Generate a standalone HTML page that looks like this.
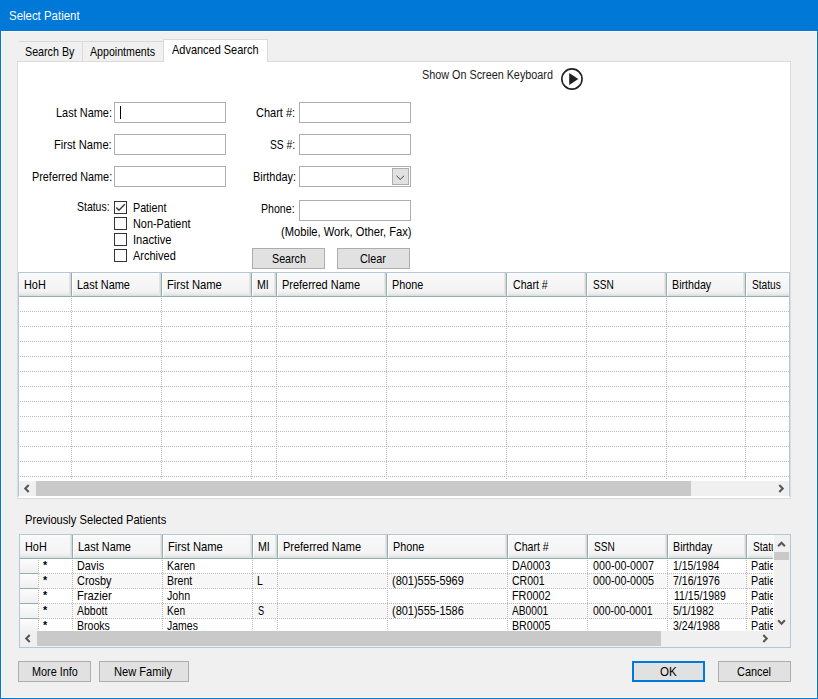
<!DOCTYPE html>
<html><head><meta charset="utf-8"><title>Select Patient</title><style>
*{box-sizing:border-box;margin:0;padding:0}
html,body{width:818px;height:699px;overflow:hidden;background:#f0f0f0}
body{position:relative;font-family:"Liberation Sans",sans-serif;font-size:13px;color:#000}
.a{position:absolute}
.t{position:absolute;white-space:nowrap;transform-origin:0 0}
.title{left:0;top:0;width:818px;height:31px;background:#0078d7}
.panel{left:17px;top:61px;width:774px;height:438px;background:#fff;border:1px solid #dcdcdc}
.tab{top:41px;height:20px;border:1px solid #d9d9d9;border-bottom:none;background:#f0f0f0}
.tab.sel{top:39px;height:23px;background:#fff}
.inp{height:21px;width:112px;background:#fff;border:1px solid #abadb3}
.cb{width:13px;height:13px;border:1px solid #333;background:#fff}
.btn{height:21px;background:#e1e1e1;border:1px solid #adadad}
.grid{position:absolute;background:#fff;border:1px solid #b4c7d9;overflow:hidden}
.hdr{position:absolute;left:0;top:0;height:24px;background:linear-gradient(#ffffff 0,#f8f8f8 10%,#f4f4f4 78%,#ebebeb 90%,#dadada 100%);border-bottom:1px solid #8fb0b0}
.hs{position:absolute;top:0;width:4px;height:23px;background:linear-gradient(90deg,#ebebeb,#d2d2d2 50%,#8fb0b0 50%,#8fb0b0 75%,#fff 75%)}
.vl{position:absolute;width:1px;background-image:linear-gradient(#b8b8b8 50%,transparent 50%);background-size:1px 2px}
.hl{position:absolute;height:1px;background-image:linear-gradient(90deg,#b8b8b8 50%,transparent 50%);background-size:2px 1px}
.sb{position:absolute;background:#f0f0f0}
.th{position:absolute;background:#c9c9c9}
.rh{position:absolute;left:0;width:18px;background:linear-gradient(#fdfdfd,#efefef);border-bottom:1px solid #8fb0b0}
</style></head><body>
<div class="a title"></div>
<div class="a" style="left:0;top:31px;width:1px;height:668px;background:#0078d7"></div>
<div class="a" style="left:817px;top:31px;width:1px;height:668px;background:#0078d7"></div>
<div class="a" style="left:0;top:698px;width:818px;height:1px;background:#0078d7"></div>
<div class="a" style="left:1px;top:31px;width:816px;height:667px;border:1px solid #faf6f0"></div>
<div class="t" style="left:8.95px;top:8.84px;font-size:12px;line-height:14px;transform:scaleX(0.9530);color:#fff;">Select Patient</div>
<div class="a panel"></div>
<div class="a tab" style="left:19px;width:64px;border-left:none"></div>
<div class="a tab" style="left:82px;width:82px"></div>
<div class="a tab sel" style="left:163px;width:105px"></div>
<div class="t" style="left:25.45px;top:44.00px;font-size:13px;line-height:15px;transform:scaleX(0.8235);">Search By</div>
<div class="t" style="left:90.45px;top:44.00px;font-size:13px;line-height:15px;transform:scaleX(0.8176);">Appointments</div>
<div class="t" style="left:172.35px;top:42.00px;font-size:13px;line-height:15px;transform:scaleX(0.8428);">Advanced Search</div>
<div class="t" style="left:422.45px;top:67.84px;font-size:12px;line-height:14px;transform:scaleX(0.9002);color:#1c1c1c;">Show On Screen Keyboard</div>
<svg class="a" style="left:560px;top:67px" width="24" height="24" viewBox="0 0 24 24"><circle cx="11.95" cy="12" r="10.1" fill="#fff" stroke="#231f20" stroke-width="1.6"/><path d="M9.2 5.9 L18.3 12 L9.2 18 Z" fill="#231f20"/></svg>
<div class="t" style="left:55.81px;top:105.00px;font-size:13px;line-height:15px;transform:scaleX(0.8418);">Last Name:</div>
<div class="t" style="left:54.09px;top:137.00px;font-size:13px;line-height:15px;transform:scaleX(0.8588);">First Name:</div>
<div class="t" style="left:31.92px;top:169.00px;font-size:13px;line-height:15px;transform:scaleX(0.8340);">Preferred Name:</div>
<div class="t" style="left:76.65px;top:199.00px;font-size:13px;line-height:15px;transform:scaleX(0.8054);">Status:</div>
<div class="t" style="left:256.35px;top:105.00px;font-size:13px;line-height:15px;transform:scaleX(0.8459);">Chart #:</div>
<div class="t" style="left:270.45px;top:137.00px;font-size:13px;line-height:15px;transform:scaleX(0.7921);">SS #:</div>
<div class="t" style="left:253.21px;top:169.00px;font-size:13px;line-height:15px;transform:scaleX(0.8392);">Birthday:</div>
<div class="t" style="left:260.93px;top:201.00px;font-size:13px;line-height:15px;transform:scaleX(0.8158);">Phone:</div>
<div class="a inp" style="left:114px;top:102px"></div>
<div class="a inp" style="left:114px;top:134px"></div>
<div class="a inp" style="left:114px;top:166px"></div>
<div class="a inp" style="left:299px;top:102px"></div>
<div class="a inp" style="left:299px;top:134px"></div>
<div class="a inp" style="left:299px;top:166px"></div>
<div class="a inp" style="left:299px;top:200px"></div>
<div class="a" style="left:120px;top:106px;width:1px;height:13px;background:#000"></div>
<div class="a" style="left:392px;top:168px;width:17px;height:17px;background:#e1e1e1;border:1px solid #adadad"></div>
<svg class="a" style="left:392px;top:168px" width="17" height="17" viewBox="0 0 17 17"><path d="M4.5 7.8 L8.25 11.5 L12 7.8" fill="none" stroke="#404040" stroke-width="1"/></svg>
<div class="t" style="left:280.55px;top:224.00px;font-size:13px;line-height:15px;transform:scaleX(0.8580);">(Mobile, Work, Other, Fax)</div>
<div class="a cb" style="left:114px;top:201px"></div>
<div class="a cb" style="left:114px;top:217px"></div>
<div class="a cb" style="left:114px;top:233px"></div>
<div class="a cb" style="left:114px;top:249px"></div>
<svg class="a" style="left:114px;top:201px" width="13" height="13" viewBox="0 0 13 13"><path d="M2.3 6.4 L4.95 9.2 L10.8 3.2" fill="none" stroke="#383838" stroke-width="1.4"/></svg>
<div class="t" style="left:133.02px;top:200.00px;font-size:13px;line-height:15px;transform:scaleX(0.8254);">Patient</div>
<div class="t" style="left:133.01px;top:216.00px;font-size:13px;line-height:15px;transform:scaleX(0.8378);">Non-Patient</div>
<div class="t" style="left:133.19px;top:232.00px;font-size:13px;line-height:15px;transform:scaleX(0.8584);">Inactive</div>
<div class="t" style="left:133.35px;top:248.00px;font-size:13px;line-height:15px;transform:scaleX(0.8461);">Archived</div>
<div class="a btn" style="left:252px;top:248px;width:73px"></div>
<div class="a btn" style="left:337px;top:248px;width:73px"></div>
<div class="t" style="left:271.55px;top:251.00px;font-size:13px;line-height:15px;transform:scaleX(0.8228);">Search</div>
<div class="t" style="left:360.05px;top:251.00px;font-size:13px;line-height:15px;transform:scaleX(0.8319);">Clear</div>
<div class="grid" style="left:18px;top:272px;width:772px;height:225px;border-bottom-color:#fff">
<div class="hdr" style="width:770px"></div>
<div class="hs" style="left:50px"></div>
<div class="hs" style="left:140px"></div>
<div class="hs" style="left:230px"></div>
<div class="hs" style="left:255px"></div>
<div class="hs" style="left:365px"></div>
<div class="hs" style="left:485px"></div>
<div class="hs" style="left:565px"></div>
<div class="hs" style="left:645px"></div>
<div class="hs" style="left:724px"></div>
<div class="hl" style="left:1px;top:38px;width:770px"></div>
<div class="hl" style="left:1px;top:53px;width:770px"></div>
<div class="hl" style="left:1px;top:68px;width:770px"></div>
<div class="hl" style="left:1px;top:83px;width:770px"></div>
<div class="hl" style="left:1px;top:98px;width:770px"></div>
<div class="hl" style="left:1px;top:113px;width:770px"></div>
<div class="hl" style="left:1px;top:128px;width:770px"></div>
<div class="hl" style="left:1px;top:143px;width:770px"></div>
<div class="hl" style="left:1px;top:158px;width:770px"></div>
<div class="hl" style="left:1px;top:173px;width:770px"></div>
<div class="hl" style="left:1px;top:188px;width:770px"></div>
<div class="hl" style="left:1px;top:203px;width:770px"></div>
<div class="vl" style="left:52px;top:25px;height:181px"></div>
<div class="vl" style="left:142px;top:25px;height:181px"></div>
<div class="vl" style="left:232px;top:25px;height:181px"></div>
<div class="vl" style="left:257px;top:25px;height:181px"></div>
<div class="vl" style="left:367px;top:25px;height:181px"></div>
<div class="vl" style="left:487px;top:25px;height:181px"></div>
<div class="vl" style="left:567px;top:25px;height:181px"></div>
<div class="vl" style="left:647px;top:25px;height:181px"></div>
<div class="vl" style="left:726px;top:25px;height:181px"></div>
<div class="sb" style="left:0;top:208px;width:770px;height:15px"></div>
<div class="th" style="left:17px;top:208px;width:655px;height:15px"></div>
</div>
<div class="t" style="left:23.81px;top:277.00px;font-size:13px;line-height:15px;transform:scaleX(0.8368);">HoH</div>
<div class="t" style="left:76.71px;top:277.00px;font-size:13px;line-height:15px;transform:scaleX(0.8421);">Last Name</div>
<div class="t" style="left:166.99px;top:277.00px;font-size:13px;line-height:15px;transform:scaleX(0.8632);">First Name</div>
<div class="t" style="left:257.03px;top:277.00px;font-size:13px;line-height:15px;transform:scaleX(0.8185);">MI</div>
<div class="t" style="left:281.71px;top:277.00px;font-size:13px;line-height:15px;transform:scaleX(0.8438);">Preferred Name</div>
<div class="t" style="left:391.52px;top:277.00px;font-size:13px;line-height:15px;transform:scaleX(0.8333);">Phone</div>
<div class="t" style="left:512.65px;top:277.00px;font-size:13px;line-height:15px;transform:scaleX(0.8133);">Chart #</div>
<div class="t" style="left:592.85px;top:277.00px;font-size:13px;line-height:15px;transform:scaleX(0.7782);">SSN</div>
<div class="t" style="left:671.83px;top:277.00px;font-size:13px;line-height:15px;transform:scaleX(0.8222);">Birthday</div>
<div class="t" style="left:751.85px;top:277.00px;font-size:13px;line-height:15px;transform:scaleX(0.7817);">Status</div>
<svg class="a" style="left:0;top:0;overflow:visible" width="1" height="1"><path d="M28.7 485.1 L25.3 488.5 L28.7 491.9" fill="none" stroke="#585858" stroke-width="2.1"/></svg>
<svg class="a" style="left:0;top:0;overflow:visible" width="1" height="1"><path d="M779.3 485.1 L782.7 488.5 L779.3 491.9" fill="none" stroke="#585858" stroke-width="2.1"/></svg>
<div class="t" style="left:24.69px;top:512.00px;font-size:13px;line-height:15px;transform:scaleX(0.8572);">Previously Selected Patients</div>
<div class="grid" style="left:19px;top:534px;width:772px;height:114px;">
<div class="hdr" style="width:770px"></div>
<div class="hs" style="left:50px"></div>
<div class="hs" style="left:140px"></div>
<div class="hs" style="left:230px"></div>
<div class="hs" style="left:255px"></div>
<div class="hs" style="left:365px"></div>
<div class="hs" style="left:485px"></div>
<div class="hs" style="left:565px"></div>
<div class="hs" style="left:645px"></div>
<div class="hs" style="left:724px"></div>
<div class="rh" style="top:24px;height:15px"></div>
<div class="hl" style="left:19px;top:38px;width:770px"></div>
<div class="a" style="left:19px;top:39px;width:770px;height:14px;background:#f7f7f7"></div>
<div class="rh" style="top:39px;height:15px"></div>
<div class="hl" style="left:19px;top:53px;width:770px"></div>
<div class="rh" style="top:54px;height:15px"></div>
<div class="hl" style="left:19px;top:68px;width:770px"></div>
<div class="a" style="left:19px;top:69px;width:770px;height:14px;background:#f7f7f7"></div>
<div class="rh" style="top:69px;height:15px"></div>
<div class="hl" style="left:19px;top:83px;width:770px"></div>
<div class="rh" style="top:84px;height:15px"></div>
<div class="hl" style="left:19px;top:98px;width:770px"></div>
<div class="vl" style="left:18px;top:25px;height:69px"></div>
<div class="vl" style="left:52px;top:25px;height:69px"></div>
<div class="vl" style="left:142px;top:25px;height:69px"></div>
<div class="vl" style="left:232px;top:25px;height:69px"></div>
<div class="vl" style="left:257px;top:25px;height:69px"></div>
<div class="vl" style="left:367px;top:25px;height:69px"></div>
<div class="vl" style="left:487px;top:25px;height:69px"></div>
<div class="vl" style="left:567px;top:25px;height:69px"></div>
<div class="vl" style="left:647px;top:25px;height:69px"></div>
<div class="vl" style="left:726px;top:25px;height:69px"></div>
<div class="sb" style="left:0;top:96px;width:770px;height:16px"></div>
<div class="th" style="left:17px;top:96px;width:624px;height:15px"></div>
<div class="a" style="left:753px;top:0;width:1px;height:96px;background:#fff"></div>
<div class="sb" style="left:754px;top:0;width:16px;height:112px"></div>
<div class="th" style="left:754px;top:17px;width:15px;height:8px"></div>
</div>
<div class="a" style="left:0;top:0;width:773px;height:699px;overflow:hidden">
<div class="t" style="left:24.81px;top:539.00px;font-size:13px;line-height:15px;transform:scaleX(0.8368);">HoH</div>
<div class="t" style="left:77.71px;top:539.00px;font-size:13px;line-height:15px;transform:scaleX(0.8421);">Last Name</div>
<div class="t" style="left:167.99px;top:539.00px;font-size:13px;line-height:15px;transform:scaleX(0.8632);">First Name</div>
<div class="t" style="left:258.03px;top:539.00px;font-size:13px;line-height:15px;transform:scaleX(0.8185);">MI</div>
<div class="t" style="left:282.71px;top:539.00px;font-size:13px;line-height:15px;transform:scaleX(0.8438);">Preferred Name</div>
<div class="t" style="left:392.52px;top:539.00px;font-size:13px;line-height:15px;transform:scaleX(0.8333);">Phone</div>
<div class="t" style="left:513.65px;top:539.00px;font-size:13px;line-height:15px;transform:scaleX(0.8133);">Chart #</div>
<div class="t" style="left:593.85px;top:539.00px;font-size:13px;line-height:15px;transform:scaleX(0.7782);">SSN</div>
<div class="t" style="left:672.83px;top:539.00px;font-size:13px;line-height:15px;transform:scaleX(0.8222);">Birthday</div>
<div class="t" style="left:752.85px;top:539.00px;font-size:13px;line-height:15px;transform:scaleX(0.7817);">Status</div>
</div>
<div class="a" style="left:0;top:0;width:773px;height:631px;overflow:hidden">
<div class="t" style="left:77.22px;top:558.00px;font-size:13px;line-height:15px;transform:scaleX(0.8342);">Davis</div>
<div class="t" style="left:167.24px;top:558.00px;font-size:13px;line-height:15px;transform:scaleX(0.8099);">Karen</div>
<div class="t" style="left:512.33px;top:558.00px;font-size:13px;line-height:15px;transform:scaleX(0.8175);">DA0003</div>
<div class="t" style="left:592.55px;top:558.00px;font-size:13px;line-height:15px;transform:scaleX(0.8259);">000-00-0007</div>
<div class="t" style="left:673.25px;top:558.00px;font-size:13px;line-height:15px;transform:scaleX(0.7986);">1/15/1984</div>
<div class="t" style="left:751.42px;top:558.00px;font-size:13px;line-height:15px;transform:scaleX(0.8254);">Patient</div>
<div class="t" style="left:43.25px;top:560.33px;font-size:10px;line-height:12px;transform:scaleX(1.0750);font-weight:bold;">*</div>
<div class="t" style="left:77.05px;top:573.00px;font-size:13px;line-height:15px;transform:scaleX(0.8398);">Crosby</div>
<div class="t" style="left:167.24px;top:573.00px;font-size:13px;line-height:15px;transform:scaleX(0.8109);">Brent</div>
<div class="t" style="left:257.23px;top:573.00px;font-size:13px;line-height:15px;transform:scaleX(0.8167);">L</div>
<div class="t" style="left:391.85px;top:573.00px;font-size:13px;line-height:15px;transform:scaleX(0.8418);">(801)555-5969</div>
<div class="t" style="left:512.35px;top:573.00px;font-size:13px;line-height:15px;transform:scaleX(0.8077);">CR001</div>
<div class="t" style="left:592.55px;top:573.00px;font-size:13px;line-height:15px;transform:scaleX(0.8259);">000-00-0005</div>
<div class="t" style="left:672.55px;top:573.00px;font-size:13px;line-height:15px;transform:scaleX(0.8107);">7/16/1976</div>
<div class="t" style="left:751.42px;top:573.00px;font-size:13px;line-height:15px;transform:scaleX(0.8254);">Patient</div>
<div class="t" style="left:43.25px;top:575.33px;font-size:10px;line-height:12px;transform:scaleX(1.0750);font-weight:bold;">*</div>
<div class="t" style="left:77.19px;top:588.00px;font-size:13px;line-height:15px;transform:scaleX(0.8600);">Frazier</div>
<div class="t" style="left:167.35px;top:588.00px;font-size:13px;line-height:15px;transform:scaleX(0.8190);">John</div>
<div class="t" style="left:512.32px;top:588.00px;font-size:13px;line-height:15px;transform:scaleX(0.8308);">FR0002</div>
<div class="t" style="left:673.75px;top:588.00px;font-size:13px;line-height:15px;transform:scaleX(0.8079);">11/15/1989</div>
<div class="t" style="left:751.42px;top:588.00px;font-size:13px;line-height:15px;transform:scaleX(0.8254);">Patient</div>
<div class="t" style="left:43.25px;top:590.33px;font-size:10px;line-height:12px;transform:scaleX(1.0750);font-weight:bold;">*</div>
<div class="t" style="left:77.05px;top:603.00px;font-size:13px;line-height:15px;transform:scaleX(0.8058);">Abbott</div>
<div class="t" style="left:167.27px;top:603.00px;font-size:13px;line-height:15px;transform:scaleX(0.7808);">Ken</div>
<div class="t" style="left:257.75px;top:603.00px;font-size:13px;line-height:15px;transform:scaleX(0.7111);">S</div>
<div class="t" style="left:391.85px;top:603.00px;font-size:13px;line-height:15px;transform:scaleX(0.8418);">(801)555-1586</div>
<div class="t" style="left:511.95px;top:603.00px;font-size:13px;line-height:15px;transform:scaleX(0.7842);">AB0001</div>
<div class="t" style="left:592.55px;top:603.00px;font-size:13px;line-height:15px;transform:scaleX(0.8082);">000-00-0001</div>
<div class="t" style="left:672.55px;top:603.00px;font-size:13px;line-height:15px;transform:scaleX(0.8060);">5/1/1982</div>
<div class="t" style="left:751.42px;top:603.00px;font-size:13px;line-height:15px;transform:scaleX(0.8254);">Patient</div>
<div class="t" style="left:43.25px;top:605.33px;font-size:10px;line-height:12px;transform:scaleX(1.0750);font-weight:bold;">*</div>
<div class="t" style="left:77.24px;top:618.00px;font-size:13px;line-height:15px;transform:scaleX(0.8133);">Brooks</div>
<div class="t" style="left:167.35px;top:618.00px;font-size:13px;line-height:15px;transform:scaleX(0.8069);">James</div>
<div class="t" style="left:512.33px;top:618.00px;font-size:13px;line-height:15px;transform:scaleX(0.8175);">BR0005</div>
<div class="t" style="left:672.55px;top:618.00px;font-size:13px;line-height:15px;transform:scaleX(0.8107);">3/24/1988</div>
<div class="t" style="left:751.42px;top:618.00px;font-size:13px;line-height:15px;transform:scaleX(0.8254);">Patient</div>
<div class="t" style="left:43.25px;top:620.33px;font-size:10px;line-height:12px;transform:scaleX(1.0750);font-weight:bold;">*</div>
</div>
<svg class="a" style="left:0;top:0;overflow:visible" width="1" height="1"><path d="M29.7 635.1 L26.3 638.5 L29.7 641.9" fill="none" stroke="#585858" stroke-width="2.1"/></svg>
<svg class="a" style="left:0;top:0;overflow:visible" width="1" height="1"><path d="M763.3 635.1 L766.7 638.5 L763.3 641.9" fill="none" stroke="#585858" stroke-width="2.1"/></svg>
<svg class="a" style="left:0;top:0;overflow:visible" width="1" height="1"><path d="M778.1 546.2 L781.5 542.8 L784.9 546.2" fill="none" stroke="#585858" stroke-width="2.1"/></svg>
<svg class="a" style="left:0;top:0;overflow:visible" width="1" height="1"><path d="M778.1 620.3 L781.5 623.7 L784.9 620.3" fill="none" stroke="#585858" stroke-width="2.1"/></svg>
<div class="a btn" style="left:18px;top:661px;width:73px"></div>
<div class="a btn" style="left:99px;top:661px;width:90px"></div>
<div class="a btn" style="left:632px;top:661px;width:73px;border:2px solid #0078d7"></div>
<div class="a btn" style="left:718px;top:661px;width:73px"></div>
<div class="t" style="left:31.92px;top:664.00px;font-size:13px;line-height:15px;transform:scaleX(0.8345);">More Info</div>
<div class="t" style="left:113.90px;top:664.00px;font-size:13px;line-height:15px;transform:scaleX(0.8547);">New Family</div>
<div class="t" style="left:660.15px;top:664.00px;font-size:13px;line-height:15px;transform:scaleX(0.8895);">OK</div>
<div class="t" style="left:737.05px;top:664.00px;font-size:13px;line-height:15px;transform:scaleX(0.8404);">Cancel</div>
</body></html>
